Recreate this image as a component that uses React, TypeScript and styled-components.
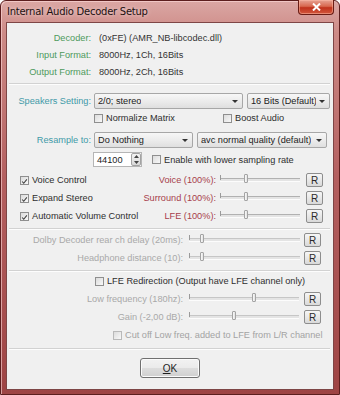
import React from "react";
import styled, {createGlobalStyle} from "styled-components";

const GlobalStyle = createGlobalStyle`
  html, body {
    margin: 0;
    padding: 0;
  }
  body {
    width: 340px;
    height: 395px;
    overflow: hidden;
    font-family: "Liberation Sans", Arial, sans-serif;
    font-size: 9.2px;
    color: #2e2e2e;
  }
`

interface ICheck {
    checked?: boolean
    disabled?: boolean
}
const CheckBox: React.FC<ICheck> = ({checked, disabled}) => {
    return (
        <Box $disabled={disabled}>
            {
                checked &&
                <svg width="9" height="9" viewBox="0 0 9 9">
                    <path d="M1.5 4.5 L3.5 6.8 L7.5 1.8" fill="none" stroke="#3b3b3b" strokeWidth="1.3"/>
                </svg>
            }
        </Box>
    )
}

interface ISlider {
    width: number
    pos: number
    dim?: boolean
}
const Slider: React.FC<ISlider> = ({width, pos, dim}) => {
    return (
        <Track $width={width} $dim={dim}>
            <Tick/>
            <Thumb style={{left: pos}}/>
        </Track>
    )
}

interface ISelect {
    text: string
    width: number
}
const Select: React.FC<ISelect> = ({text, width}) => {
    return (
        <SelectBox $width={width}>
            <SelectText>{text}</SelectText>
            <Arrow/>
        </SelectBox>
    )
}

const App: React.FC = () => {
    return (
        <Frame>
            <GlobalStyle/>
            <TitleBar>
                <Title>Internal Audio Decoder Setup</Title>
                <CloseButton>
                    <svg width="9" height="8" viewBox="0 0 9 8">
                        <path d="M1 0.5 L8 7.5 M8 0.5 L1 7.5" stroke="#fff" strokeWidth="2"/>
                    </svg>
                </CloseButton>
            </TitleBar>
            <Client>
                <Info>
                    <InfoLabel>Decoder:</InfoLabel>
                    <InfoValue>(0xFE) (AMR_NB-libcodec.dll)</InfoValue>
                    <InfoLabel>Input Format:</InfoLabel>
                    <InfoValue>8000Hz, 1Ch, 16Bits</InfoValue>
                    <InfoLabel>Output Format:</InfoLabel>
                    <InfoValue>8000Hz, 2Ch, 16Bits</InfoValue>
                </Info>
                <Separator/>
                <Settings>
                    <SelectRow>
                        <SettingLabel>Speakers Setting:</SettingLabel>
                        <Select text="2/0; stereo" width={149}/>
                        <Select text="16 Bits (Default)" width={83}/>
                    </SelectRow>
                    <OptionRow>
                        <Check $left={94}><CheckBox/>Normalize Matrix</Check>
                        <Check $left={223}><CheckBox/>Boost Audio</Check>
                    </OptionRow>
                    <SelectRow $top={5}>
                        <SettingLabel>Resample to:</SettingLabel>
                        <Select text="Do Nothing" width={99}/>
                        <Select text="avc normal quality (default)" width={130}/>
                    </SelectRow>
                    <RateRow>
                        <RateInput>
                            <span>44100</span>
                            <Spinner>
                                <svg width="7" height="11" viewBox="0 0 7 11">
                                    <path d="M3.5 1 L6 4 L1 4 Z M1 7 L6 7 L3.5 10 Z" fill="#444"/>
                                </svg>
                            </Spinner>
                        </RateInput>
                        <Check $left={152}><CheckBox/>Enable with lower sampling rate</Check>
                    </RateRow>
                </Settings>
                <Mixer>
                    <Check><CheckBox checked/>Voice Control</Check>
                    <MixLabel>Voice (100%):</MixLabel>
                    <Slider width={80} pos={24}/>
                    <ResetButton>R</ResetButton>
                    <Check><CheckBox checked/>Expand Stereo</Check>
                    <MixLabel>Surround (100%):</MixLabel>
                    <Slider width={80} pos={24}/>
                    <ResetButton>R</ResetButton>
                    <Check><CheckBox checked/>Automatic Volume Control</Check>
                    <MixLabel>LFE (100%):</MixLabel>
                    <Slider width={80} pos={24}/>
                    <ResetButton>R</ResetButton>
                </Mixer>
                <Separator/>
                <Delays>
                    <DimLabel>Dolby Decoder rear ch delay (20ms):</DimLabel>
                    <Slider width={111} pos={11} dim/>
                    <ResetButton>R</ResetButton>
                    <DimLabel>Headphone distance (10):</DimLabel>
                    <Slider width={111} pos={11} dim/>
                    <ResetButton>R</ResetButton>
                </Delays>
                <Separator $top={3}/>
                <Lfe>
                    <LfeCheck $left={95}><CheckBox/>LFE Redirection (Output have LFE channel only)</LfeCheck>
                    <Delays $pad={0}>
                        <DimLabel>Low frequency (180hz):</DimLabel>
                        <Slider width={110} pos={63} dim/>
                        <ResetButton>R</ResetButton>
                        <DimLabel>Gain (-2,00 dB):</DimLabel>
                        <Slider width={110} pos={43} dim/>
                        <ResetButton>R</ResetButton>
                    </Delays>
                    <LfeCheck $left={113} $dim><CheckBox disabled/>Cut off Low freq. added to LFE from L/R channel</LfeCheck>
                </Lfe>
                <Separator $top={4}/>
                <Footer>
                    <OkButton><u>O</u>K</OkButton>
                </Footer>
            </Client>
        </Frame>
    )
}

const Frame = styled.div`
  width: 340px;
  height: 395px;
  box-sizing: border-box;
  display: flex;
  flex-direction: column;
  padding: 0 5px 4px 5px;
  border: 1px solid #5c1e1e;
  border-radius: 6px 6px 0 0;
  background: linear-gradient(to bottom, #dba7a4 0%, #cd8b87 8%, #b46060 45%, #9e4444 100%);
  box-shadow: inset 1px 1px 0 rgba(255, 220, 220, 0.6);
`
const TitleBar = styled.div`
  height: 21px;
  display: flex;
  flex-direction: row;
  justify-content: space-between;
  align-items: flex-start;
`
const Title = styled.span`
  margin: 5px 0 0 1px;
  font-family: "DejaVu Sans", sans-serif;
  font-size: 10px;
  letter-spacing: -0.25px;
  color: #1c1010;
  text-shadow: 0 0 4px rgba(255, 235, 235, 0.9);
`
const CloseButton = styled.div`
  width: 36px;
  height: 15px;
  margin-top: -1px;
  box-sizing: border-box;
  display: flex;
  justify-content: center;
  align-items: center;
  border: 1px solid #6a1c14;
  border-top: none;
  border-radius: 0 0 4px 4px;
  background: linear-gradient(to bottom, #e7a394 0%, #d8684f 45%, #c0321c 55%, #d2573d 100%);
  box-shadow: inset 0 0 0 1px rgba(255, 190, 170, 0.5);
`
const Client = styled.div`
  flex: 1;
  display: flex;
  flex-direction: column;
  background: #f0f0f0;
  border: 1px solid #7e4646;
`
const Info = styled.div`
  display: grid;
  grid-template-columns: 84px 1fr;
  grid-auto-rows: 17px;
  column-gap: 8px;
  align-items: center;
  padding-top: 6px;
`
const InfoLabel = styled.span`
  text-align: right;
  color: #4e9a5c;
`
const InfoValue = styled.span`
  color: #333;
`
const Separator = styled.div<{ $top?: number }>`
  margin: ${p => p.$top ?? 3}px 3px 0 2px;
  border-top: 1px solid #d2d2d2;
  border-bottom: 1px solid #fdfdfd;
`
const Settings = styled.div`
  display: flex;
  flex-direction: column;
  padding-top: 8px;
`
const SelectRow = styled.div<{ $top?: number }>`
  height: 16px;
  margin-top: ${p => p.$top ?? 0}px;
  display: flex;
  flex-direction: row;
  align-items: center;
  gap: 4px;
`
const SettingLabel = styled.span`
  width: 84px;
  margin-right: -1px;
  text-align: right;
  color: #3f9aa8;
`
const SelectBox = styled.div<{ $width: number }>`
  width: ${p => p.$width}px;
  height: 16px;
  box-sizing: border-box;
  display: flex;
  flex-direction: row;
  align-items: center;
  justify-content: space-between;
  padding: 0 4px 0 3px;
  border: 1px solid #a7a7a7;
  border-radius: 2px;
  background: linear-gradient(to bottom, #f7f7f7 0%, #ececec 50%, #dfdfdf 100%);
  color: #222;
  overflow: hidden;
`
const SelectText = styled.span`
  white-space: nowrap;
  overflow: hidden;
`
const Arrow = styled.span`
  flex-shrink: 0;
  margin-left: 3px;
  width: 0;
  height: 0;
  border-left: 3px solid transparent;
  border-right: 3px solid transparent;
  border-top: 3px solid #333;
`
const OptionRow = styled.div`
  height: 18px;
  position: relative;
`
const Check = styled.label<{ $left?: number }>`
  display: flex;
  flex-direction: row;
  align-items: center;
  gap: 3px;
  white-space: nowrap;
  color: #2e2e2e;
  ${p => p.$left !== undefined && `position: absolute; top: 0; bottom: 0; left: ${p.$left - 7}px;`}
`
const Box = styled.span<{ $disabled?: boolean }>`
  width: 9px;
  height: 9px;
  flex-shrink: 0;
  box-sizing: border-box;
  display: inline-flex;
  border: 1px solid ${p => p.$disabled ? "#b9b9b9" : "#8f8f8f"};
  background: linear-gradient(135deg, #dcdcdc 0%, #f8f8f8 100%);
`
const RateRow = styled.div`
  height: 15px;
  margin-top: 4px;
  position: relative;
`
const RateInput = styled.div`
  position: absolute;
  left: 86px;
  top: 0;
  width: 49px;
  height: 15px;
  box-sizing: border-box;
  display: flex;
  flex-direction: row;
  align-items: center;
  justify-content: space-between;
  padding-left: 3px;
  border: 1px solid #b5b5b5;
  background: #fff;
  color: #222;
`
const Spinner = styled.span`
  width: 10px;
  height: 13px;
  box-sizing: border-box;
  display: flex;
  justify-content: center;
  align-items: center;
  border: 1px solid #a3a3a3;
  border-radius: 2px;
  background: linear-gradient(to bottom, #f3f3f3, #d8d8d8);
`
const Mixer = styled.div`
  display: grid;
  grid-template-columns: 120px 76px 80px 17px;
  grid-auto-rows: 18px;
  column-gap: 0;
  align-items: center;
  padding: 4px 0 0 13px;
  & > :nth-child(4n + 3) {
    margin-left: 4px;
  }
  & > :nth-child(4n) {
    margin-left: 10px;
  }
`
const MixLabel = styled.span`
  text-align: right;
  white-space: nowrap;
  color: #a7404c;
`
const Track = styled.div<{ $width: number, $dim?: boolean }>`
  width: ${p => p.$width}px;
  height: 2px;
  position: relative;
  border-top: 1px solid ${p => p.$dim ? "#c6c6c6" : "#b1b1b1"};
  border-bottom: 1px solid #fcfcfc;
  background: #e4e4e4;
`
const Tick = styled.span`
  position: absolute;
  left: 0;
  top: -4px;
  width: 1px;
  height: 5px;
  background: #9a9a9a;
`
const Thumb = styled.span`
  position: absolute;
  top: -5px;
  width: 4px;
  height: 9px;
  box-sizing: border-box;
  border: 1px solid #a4a4a4;
  border-radius: 1px;
  background: linear-gradient(to right, #fafafa, #e2e2e2);
`
const ResetButton = styled.button`
  width: 17px;
  height: 14px;
  margin-left: 10px;
  padding: 0;
  box-sizing: border-box;
  display: flex;
  justify-content: center;
  align-items: center;
  border: 1px solid #8d8d8d;
  border-radius: 2px;
  background: linear-gradient(to bottom, #f6f6f6 0%, #e8e8e8 50%, #d9d9d9 100%);
  font-family: "Liberation Sans", Arial, sans-serif;
  font-size: 10px;
  color: #2a2a2a;
`
const Delays = styled.div<{ $pad?: number }>`
  display: grid;
  grid-template-columns: 176px 111px 27px;
  grid-auto-rows: 18px;
  align-items: center;
  padding-top: ${p => p.$pad ?? 1}px;
  & > :nth-child(3n + 2) {
    margin-left: 6px;
  }
`
const DimLabel = styled.span`
  text-align: right;
  white-space: nowrap;
  color: #a9a9a9;
`
const Lfe = styled.div`
  display: flex;
  flex-direction: column;
`
const LfeCheck = styled.label<{ $left: number, $dim?: boolean }>`
  height: 18px;
  padding-left: ${p => p.$left - 7}px;
  display: flex;
  flex-direction: row;
  align-items: center;
  gap: 3px;
  white-space: nowrap;
  color: ${p => p.$dim ? "#a3a3a3" : "#2e2e2e"};
`
const Footer = styled.div`
  display: flex;
  justify-content: center;
  padding-top: 8px;
`
const OkButton = styled.button`
  width: 60px;
  height: 20px;
  padding: 0;
  border: 1px solid #707070;
  border-radius: 3px;
  background: linear-gradient(to bottom, #f2f2f2 0%, #ebebeb 48%, #dddddd 52%, #cfcfcf 100%);
  box-shadow: inset 0 0 0 1px #fbfbfb;
  font-family: "Liberation Sans", Arial, sans-serif;
  font-size: 10px;
  color: #1e1e1e;
`
export default App
